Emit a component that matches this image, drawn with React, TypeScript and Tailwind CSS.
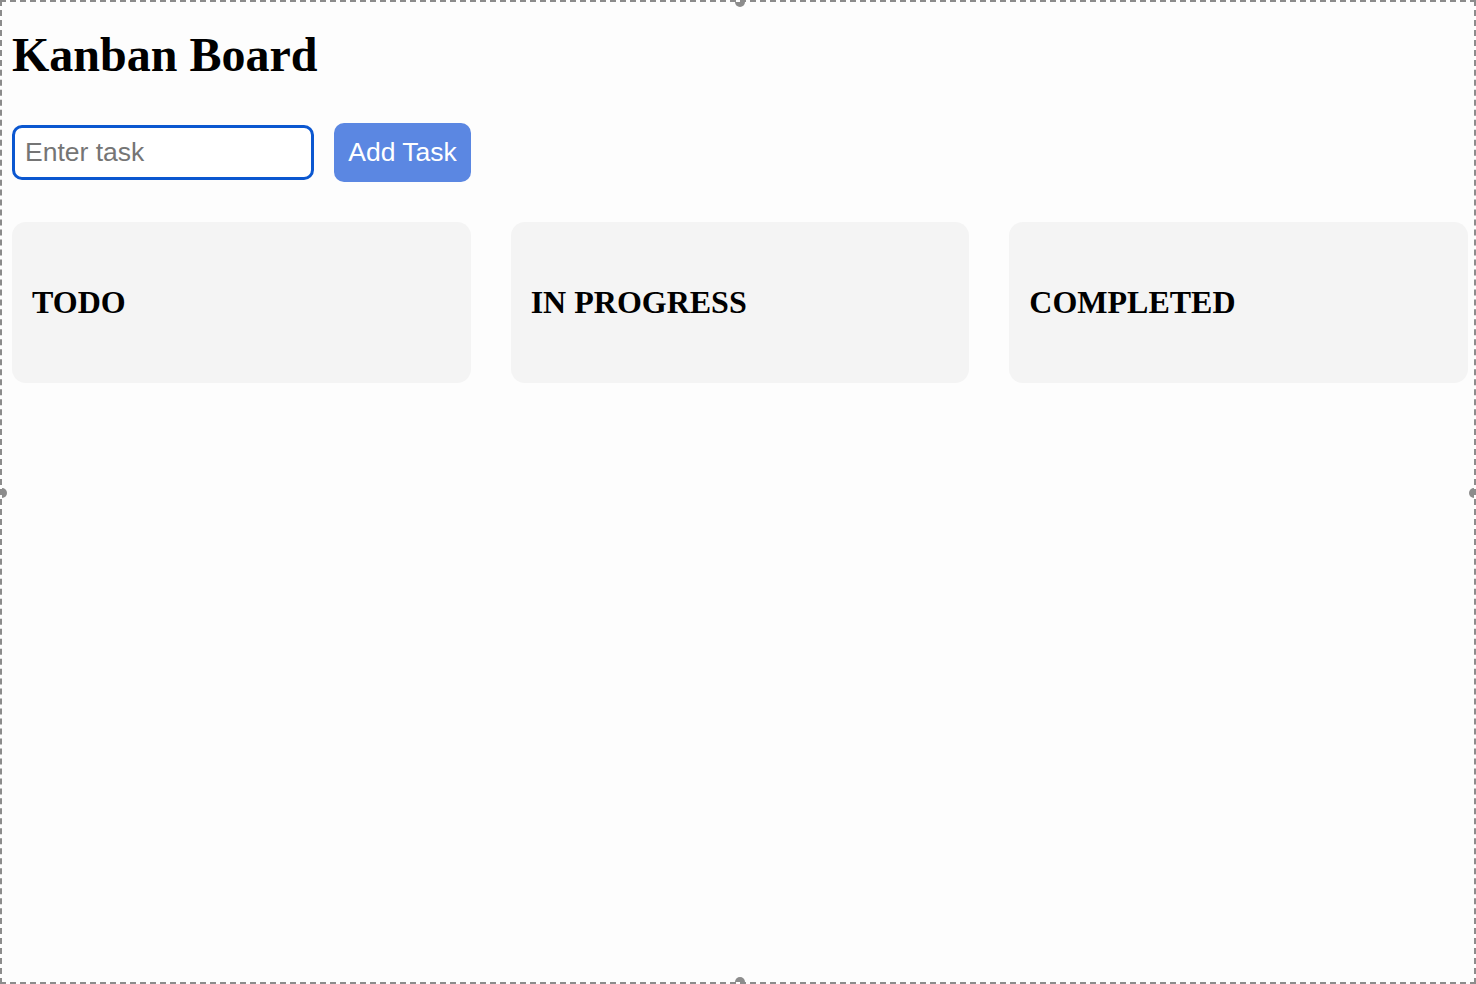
import React from "react";

export default function App() {
  const columns = ["TODO", "IN PROGRESS", "COMPLETED"];
  return (
    <div className="relative w-full h-[984px] border-2 border-dashed border-[#8c8c8c] bg-[#fdfdfd] overflow-hidden" style={{ fontFamily: '"Liberation Serif", serif' }}>
      <span className="absolute left-[733px] top-[-5px] w-[10px] h-[10px] rounded-full bg-[#8c8c8c]" />
      <span className="absolute left-[733px] bottom-[-5px] w-[10px] h-[10px] rounded-full bg-[#8c8c8c]" />
      <span className="absolute left-[-5px] top-[486px] w-[10px] h-[10px] rounded-full bg-[#8c8c8c]" />
      <span className="absolute right-[-5px] top-[486px] w-[10px] h-[10px] rounded-full bg-[#8c8c8c]" />
      <div className="pl-[10px] pr-[6px]">
        <h1 className="text-[48px] font-bold leading-[55px] text-black pt-[25px] m-0">Kanban Board</h1>
        <div className="flex items-center gap-[20px] mt-[41px]" style={{ fontFamily: '"Liberation Sans", Arial, sans-serif' }}>
          <input
            type="text"
            placeholder="Enter task"
            className="w-[302px] h-[55px] border-[3px] border-[#0b57d0] rounded-[10px] pl-[10px] pr-[10px] text-[26.5px] text-black placeholder:text-[#757575] bg-white outline-none"
          />
          <button className="w-[137px] h-[59px] rounded-[10px] bg-[#5b87e2] text-white text-[26.5px] leading-none pb-[1px]">
            Add Task
          </button>
        </div>
        <div className="grid grid-cols-3 gap-[40px] mt-[40px]">
          {columns.map((c) => (
            <div key={c} className="h-[161px] rounded-[14px] bg-[#f4f4f4] px-[20px] flex items-center">
              <h2 className="text-[32px] font-bold leading-[37px] text-black m-0">{c}</h2>
            </div>
          ))}
        </div>
      </div>
    </div>
  );
}
